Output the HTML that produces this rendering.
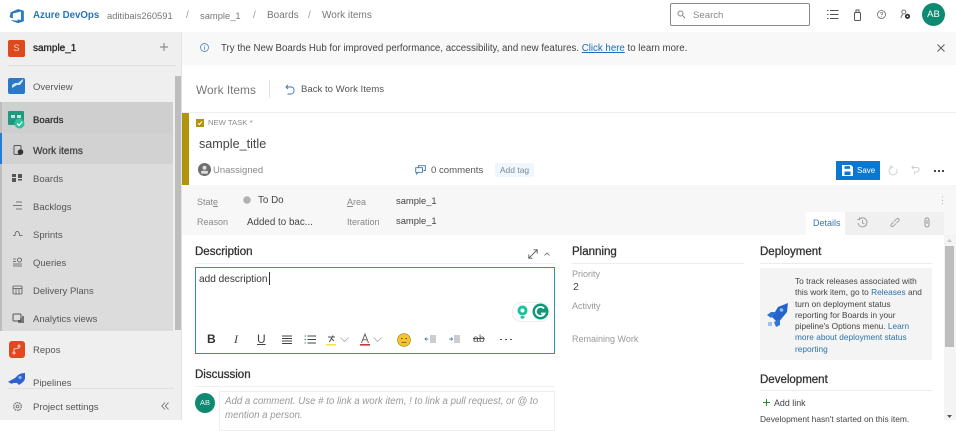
<!DOCTYPE html>
<html><head><meta charset="utf-8"><style>
html,body{margin:0;padding:0}
body{width:956px;height:420px;overflow:hidden;position:relative;background:#fff;font-family:"Liberation Sans",sans-serif;color:#333}
.t{position:absolute;white-space:nowrap;font-size:10px;line-height:14px}
.b{position:absolute}
.s{-webkit-text-stroke:.3px currentColor}
.h{font-size:11.5px;color:#333;-webkit-text-stroke:.3px #333}
.n{font-size:9.5px;color:#555}
svg{position:absolute;overflow:visible}
</style></head><body>
<!-- top bar -->
<svg style="left:9px;top:8px" width="16" height="16" viewBox="0 0 16 16"><path d="M2 4.5 L9 1.5 L14.5 3 V13 L9 14.8 L2.5 12.5 L9 13 V4 L3.5 5.5 V10 L1 9 Z" fill="#2b7cc4" stroke="#1d6fb8" stroke-width=".6"/><path d="M4 5.5 L12 3.5 V12 L4 10.5Z" fill="#fff"/></svg>
<span class="t" style="left:33px;top:9px;font-weight:bold;color:#2a74b8;font-size:9.7px">Azure DevOps</span>
<span class="t" style="left:107px;top:9px;color:#777;font-size:9.4px">aditibais260591</span>
<span class="t" style="left:186px;top:9px;color:#999">/</span>
<span class="t" style="left:200px;top:9px;color:#777;font-size:9.4px">sample_1</span>
<span class="t" style="left:253px;top:9px;color:#999">/</span>
<span class="t" style="left:267px;top:9px;color:#777">Boards</span>
<span class="t" style="left:308px;top:9px;color:#999">/</span>
<span class="t" style="left:322px;top:9px;color:#777">Work items</span>
<div class="b" style="left:670px;top:3px;width:140px;height:23px;border:1px solid #8a8a8a;border-radius:2px;box-sizing:border-box"></div>
<svg style="left:677px;top:10px" width="9" height="9" viewBox="0 0 9 9"><circle cx="3.5" cy="3.5" r="2.5" fill="none" stroke="#888"/><path d="M5.5 5.5L8 8" stroke="#888"/></svg>
<span class="t" style="left:693px;top:9px;color:#888;font-size:9.6px">Search</span>
<svg style="left:826px;top:9px" width="13" height="11" viewBox="0 0 13 11" stroke="#555" fill="none"><path d="M4 1.5H12.5M4 5.5H12.5M4 9.5H12.5M1 1.5h1.5M1 5.5h1.5M1 9.5h1.5"/></svg>
<svg style="left:853px;top:9px" width="9" height="12" viewBox="0 0 9 12" stroke="#555" fill="none"><rect x="1.5" y="3.5" width="6" height="8" rx="1"/><path d="M3 3.5V1h3v2.5"/></svg>
<svg style="left:877px;top:10px" width="9" height="9" viewBox="0 0 9 9"><circle cx="4.5" cy="4.5" r="4" fill="none" stroke="#666" stroke-width=".8"/><path d="M3.3 3.5c.2-1.4 2.4-1.2 2.4 0 0 .9-1.2.8-1.2 1.8M4.5 6.3v.8" fill="none" stroke="#666" stroke-width=".7"/></svg>
<svg style="left:900px;top:9px" width="11" height="11" viewBox="0 0 11 11"><circle cx="3.8" cy="3" r="2" fill="none" stroke="#555" stroke-width=".8"/><path d="M1 9c0-2 1-3 2-3.4" fill="none" stroke="#555" stroke-width=".8"/><circle cx="7.5" cy="7.3" r="2.6" fill="#333"/><circle cx="7.5" cy="7.3" r=".8" fill="#fff"/></svg>
<div class="b" style="left:922px;top:3px;width:23px;height:23px;border-radius:50%;background:#0f8a72;color:#fff;font-size:9.5px;line-height:23px;text-align:center">AB</div>
<!-- sidebar -->
<div class="b" style="left:0;top:32px;width:182px;height:388px;background:#efefef"></div>
<div class="b" style="left:181px;top:32px;width:1px;height:388px;background:#e2e2e2"></div>
<div class="b" style="left:8px;top:65px;width:168px;height:1px;background:#e0e0e0"></div>
<div class="b" style="left:8px;top:40px;width:17px;height:17px;border-radius:2px;background:#df4a1c;color:#f5d5c8;font-size:9px;line-height:17px;text-align:center">S</div>
<span class="t s" style="left:33px;top:42px;color:#222;font-size:10px">sample_1</span>
<svg style="left:160px;top:43px" width="8" height="8" stroke="#777" stroke-width=".9"><path d="M4 0V8M0 4H8"/></svg>
<div class="b" style="left:8px;top:78px;width:17px;height:16px;background:#2a78c6;border-radius:2px"></div>
<svg style="left:10px;top:78px" width="15" height="14" viewBox="0 0 15 14"><path d="M2 10 L7 7 H10 L13 3 V1 L8 5 H5 L2 7Z" fill="#cfe6fb"/></svg>
<span class="t n" style="left:33px;top:81px">Overview</span>
<div class="b" style="left:0;top:102px;width:173px;height:229px;background:#dcdcdc"></div>
<div class="b" style="left:0;top:102px;width:2px;height:229px;background:#bdbdbd"></div>
<div class="b" style="left:2px;top:102px;width:171px;height:62px;background:#cfcfcf"></div>
<div class="b" style="left:0;top:133px;width:173px;height:31px;background:#d2d2d2"></div>
<div class="b" style="left:0;top:133px;width:2px;height:31px;background:#1f7fd6"></div>
<div class="b" style="left:8px;top:111px;width:16px;height:14px;background:#1f9a80;border-radius:1px"></div>
<div class="b" style="left:11px;top:115px;width:4px;height:3px;background:#bfe8dd"></div><div class="b" style="left:17px;top:115px;width:4px;height:3px;background:#bfe8dd"></div>
<svg style="left:14px;top:118px" width="11" height="11" viewBox="0 0 11 11"><circle cx="5.5" cy="5.5" r="5" fill="#2fc09c"/><path d="M3 5.5L5 7.5L8.2 3.8" fill="none" stroke="#fff" stroke-width="1.2"/></svg>
<span class="t s" style="left:33px;top:114px;color:#333;font-size:9.6px">Boards</span>
<svg style="left:13px;top:144px" width="11" height="12" viewBox="0 0 11 12"><rect x="1" y="1.5" width="7" height="9" rx="1" fill="none" stroke="#555"/><circle cx="7.5" cy="8" r="2.8" fill="#333"/></svg>
<span class="t s" style="left:33px;top:145px;color:#444;font-size:10px">Work items</span>
<svg style="left:12px;top:174px" width="11" height="9" viewBox="0 0 11 9" fill="#555"><rect width="4" height="3"/><rect y="4" width="4" height="4"/><rect x="6" width="4" height="4"/><rect x="6" y="5" width="4" height="1.5"/></svg>
<span class="t n" style="left:33px;top:173px">Boards</span>
<svg style="left:12px;top:201px" width="11" height="9" viewBox="0 0 11 9" stroke="#555" fill="none"><path d="M4 1H10M1 4.5H10M4 8H10" stroke-width=".8"/></svg>
<span class="t n" style="left:33px;top:201px">Backlogs</span>
<svg style="left:12px;top:229px" width="11" height="9" viewBox="0 0 11 9" stroke="#555" fill="none"><path d="M1 6.5H3C3 1 7.5 1 7.5 6.5H10.5" stroke-width=".8"/></svg>
<span class="t n" style="left:33px;top:229px">Sprints</span>
<svg style="left:12px;top:257px" width="11" height="10" viewBox="0 0 11 10" stroke="#555" fill="none"><path d="M1 2H4M1 4.5H4M1 7H10M1 9H10" stroke-width=".8"/><circle cx="7.5" cy="3" r="2" stroke-width=".8"/></svg>
<span class="t n" style="left:33px;top:257px">Queries</span>
<svg style="left:12px;top:285px" width="11" height="10" viewBox="0 0 11 10" stroke="#555" fill="none"><rect x="1" y="1" width="9" height="8" rx="1" stroke-width=".8"/><path d="M1 3.5H10M4 3.5V9M7 3.5V9" stroke-width=".7"/></svg>
<span class="t n" style="left:33px;top:285px">Delivery Plans</span>
<svg style="left:12px;top:313px" width="12" height="11" viewBox="0 0 12 11"><rect x="1" y="1" width="8" height="7" rx="1" fill="none" stroke="#555"/><path d="M7 10V7M9 10V5M11 10V3" stroke="#333" stroke-width="1.2"/></svg>
<span class="t n" style="left:33px;top:313px">Analytics views</span>
<div class="b" style="left:9px;top:341px;width:16px;height:17px;background:#e0491f;border-radius:3px"></div>
<svg style="left:12px;top:344px" width="10" height="11" viewBox="0 0 10 11" stroke="#f7c6b5" fill="none"><path d="M2 9V5L7 4V2" stroke-width="1"/><circle cx="2" cy="9" r="1"/><circle cx="7" cy="2" r="1"/></svg>
<span class="t n" style="left:33px;top:344px">Repos</span>
<svg style="left:8px;top:373px" width="18" height="13" viewBox="0 0 18 13"><path d="M0 9 C4 6 7 6 9 3 C11 1 14 0 17 0 V5 C17 8 14 10 11 12 L9 10 L5 10 L4 11 Z" fill="#2f62cf"/><circle cx="12" cy="4.5" r="1.6" fill="#86b3f0"/></svg>
<span class="t n" style="left:33px;top:377px">Pipelines</span>
<div class="b" style="left:0;top:387px;width:181px;height:33px;background:#efefef"></div>
<div class="b" style="left:8px;top:388px;width:166px;height:1px;background:#e0e0e0"></div>
<svg style="left:12px;top:401px" width="11" height="11" viewBox="0 0 11 11"><circle cx="5.5" cy="5.5" r="3.8" fill="none" stroke="#666" stroke-width="1.2" stroke-dasharray="1.6 .8"/><circle cx="5.5" cy="5.5" r="1.4" fill="none" stroke="#666" stroke-width=".8"/></svg>
<span class="t n" style="left:33px;top:401px;font-size:9.6px">Project settings</span>
<svg style="left:161px;top:402px" width="8" height="8" viewBox="0 0 8 8" fill="none" stroke="#666" stroke-width=".8"><path d="M4 0.5L.8 4L4 7.5M7.5 .5L4.3 4L7.5 7.5"/></svg>
<div class="b" style="left:175px;top:76px;width:6px;height:254px;background:#bdbdbd"></div>
<!-- banner -->
<div class="b" style="left:182px;top:32px;width:774px;height:33px;background:#f8f8f8"></div>
<svg style="left:200px;top:43px" width="9" height="9" viewBox="0 0 9 9"><circle cx="4.5" cy="4.5" r="4" fill="none" stroke="#5a8fc9" stroke-width=".9"/><path d="M4.5 4V6.8M4.5 2.2v1" stroke="#5a8fc9" stroke-width=".9"/></svg>
<span class="t" style="left:221px;top:42px;font-size:9.7px;color:#444">Try the New Boards Hub for improved performance, accessibility, and new features. <span style="color:#1f6cb5;text-decoration:underline">Click here</span> to learn more.</span>
<svg style="left:937px;top:44px" width="8" height="8" viewBox="0 0 8 8" stroke="#555" stroke-width=".9"><path d="M.5.5L7.5 7.5M7.5.5L.5 7.5"/></svg>
<!-- header -->
<span class="t" style="left:196px;top:82px;font-size:11.9px;color:#777;line-height:16px">Work Items</span>
<div class="b" style="left:269px;top:80px;width:1px;height:18px;background:#e2e2e2"></div>
<svg style="left:285px;top:84px" width="10" height="11" viewBox="0 0 10 11" fill="none" stroke="#3b76b2" stroke-width=".9"><path d="M1 3H6.5C10 3 10 10 6 10H2.5M3 .8L1 3L3 5"/></svg>
<span class="t" style="left:301px;top:83px;color:#555;font-size:9.6px">Back to Work Items</span>
<div class="b" style="left:182px;top:112px;width:774px;height:1px;background:#efefef"></div>
<!-- work item header -->
<div class="b" style="left:182px;top:113px;width:7px;height:72px;background:#b2930e"></div>
<div class="b" style="left:196px;top:119px;width:8px;height:8px;background:#b2930e"></div>
<svg style="left:197px;top:120px" width="6" height="6" viewBox="0 0 6 6"><path d="M1 3.2L2.4 4.6L5 1.4" fill="none" stroke="#fff"/></svg>
<span class="t" style="left:208px;top:116px;font-size:7.7px;color:#8a8a8a">NEW TASK *</span>
<span class="t" style="left:199px;top:136px;font-size:12.6px;color:#444;line-height:16px">sample_title</span>
<svg style="left:198px;top:163px" width="13" height="13" viewBox="0 0 13 13"><circle cx="6.5" cy="6.5" r="6.5" fill="#6d6d6d"/><circle cx="6.5" cy="4.8" r="2" fill="#ddd"/><rect x="3" y="7.8" width="7" height="3" rx="1.4" fill="#ddd"/></svg>
<span class="t" style="left:213px;top:164px;color:#8a8a8a;font-size:9.5px">Unassigned</span>
<svg style="left:415px;top:165px" width="11" height="10" viewBox="0 0 11 10" fill="none" stroke="#3b76b2" stroke-width=".9"><path d="M3.5 2.5V.7H10.3V5.5H8.5M.7 2.7H7.5V7.3H3.2L1.7 9V7.3H.7Z"/></svg>
<span class="t" style="left:431px;top:164px;color:#555;font-size:9.6px">0 comments</span>
<div class="b" style="left:495px;top:163px;width:39px;height:14px;background:#eff6fc;color:#7d8b99;font-size:8.5px;line-height:14px;text-align:center">Add tag</div>
<div class="b" style="left:836px;top:161px;width:44px;height:19px;background:#0a78d0"></div>
<svg style="left:842px;top:165px" width="11" height="11" viewBox="0 0 11 11"><path d="M0 0H9L11 2V11H0Z" fill="#fff"/><rect x="2.5" y="1.2" width="5.5" height="2.6" fill="#0a78d0"/><rect x="2.5" y="6.5" width="6" height="3.5" fill="#0a78d0"/></svg>
<span class="t" style="left:857px;top:164px;color:#fff;font-size:8px">Save</span>
<svg style="left:888px;top:165px" width="10" height="11" viewBox="0 0 10 11" fill="none" stroke="#d4d4d4"><path d="M8.5 4A4 4 0 1 1 5.5 2H3M3.5 .4L2 2L3.5 3.6"/></svg>
<svg style="left:911px;top:165px" width="9" height="10" viewBox="0 0 9 10" fill="none" stroke="#cfcfcf"><path d="M1 2.5H6C9 2.5 9 7 5 7H3.5V9.5M2.5 .8L1 2.5L2.5 4"/></svg>
<span class="b" style="left:934px;top:170px;width:2px;height:2px;background:#444;box-shadow:4px 0 #444,8px 0 #444"></span>
<!-- fields band -->
<div class="b" style="left:182px;top:185px;width:774px;height:50px;background:#f7f7f7"></div>
<span class="t" style="left:197px;top:195px;color:#888;font-size:9px"><span>Stat</span><span style="text-decoration:underline">e</span></span>
<svg style="left:243px;top:196px" width="8" height="8"><circle cx="4" cy="4" r="3.8" fill="#b2b2b2"/></svg>
<span class="t" style="left:258px;top:194px;color:#444;font-size:9.8px">To Do</span>
<span class="t" style="left:347px;top:195px;color:#888;font-size:9px"><span style="text-decoration:underline">A</span>rea</span>
<span class="t" style="left:396px;top:194px;color:#444;font-size:9.4px">sample_1</span>
<span class="t" style="left:197px;top:215px;color:#888;font-size:9px">Reason</span>
<span class="t" style="left:247px;top:216px;color:#444;font-size:9.8px">Added to bac...</span>
<span class="t" style="left:347px;top:215px;color:#888;font-size:9px">Iteration</span>
<span class="t" style="left:396px;top:214px;color:#444;font-size:9.4px">sample_1</span>
<span class="t" style="left:938px;top:193px;color:#aaa;font-size:9px">⋮</span>
<div class="b" style="left:845px;top:212px;width:99px;height:23px;background:#f0f0f0"></div>
<div class="b" style="left:806px;top:212px;width:39px;height:23px;background:#fff"></div>
<span class="t" style="left:813px;top:216px;color:#3b76b2;font-size:9px">Details</span>
<svg style="left:857px;top:217px" width="11" height="11" viewBox="0 0 11 11" fill="none" stroke="#999" stroke-width=".9"><path d="M2 2.5A4.5 4.5 0 1 1 1 6M.5 2.5H2.5V.5M5.5 3V6L7.5 7"/></svg>
<svg style="left:890px;top:217px" width="10" height="11" viewBox="0 0 10 11" fill="none" stroke="#aaa" stroke-width="1.1"><path d="M4 4.5L6.5 2C8.5.5 10 2.5 8.5 4L6.5 6M6 6.5L3.5 9C1.5 10.5 0 8.5 1.5 7L3.5 5"/></svg>
<svg style="left:924px;top:217px" width="6" height="11" viewBox="0 0 6 11" fill="none" stroke="#999"><rect x="1" y="1" width="4" height="9" rx="2"/><path d="M3 3V7"/></svg>
<!-- Description -->
<span class="t h" style="left:195px;top:245px">Description</span>
<div class="b" style="left:195px;top:263px;width:360px;height:1px;background:#ecf2f5"></div>
<svg style="left:528px;top:249px" width="10" height="10" viewBox="0 0 10 10" fill="none" stroke="#555" stroke-width=".9"><path d="M.8 9.2L9.2.8M5.5.8H9.2V4.5M.8 5.5V9.2H4.5"/></svg>
<svg style="left:544px;top:252px" width="6" height="4" viewBox="0 0 6 4" fill="none" stroke="#666" stroke-width=".8"><path d="M.5 3.5L3 1L5.5 3.5"/></svg>
<div class="b" style="left:195px;top:267px;width:360px;height:87px;border:1px solid #2e8fb0;box-sizing:border-box"></div>
<span class="t" style="left:199px;top:273px;font-size:10.1px;color:#333">add description</span>
<div class="b" style="left:269px;top:272px;width:1px;height:13px;background:#333"></div>
<div class="b" style="left:512px;top:302px;width:38px;height:20px;background:#fff;border-radius:9px 10px 10px 9px;border:1px solid #eee;box-sizing:border-box"></div>
<svg style="left:516px;top:304px" width="13" height="16" viewBox="0 0 13 16"><circle cx="6.5" cy="6.5" r="5" fill="#15c39a"/><circle cx="6.5" cy="6.5" r="2" fill="#fff"/><rect x="4.5" y="12" width="4" height="2.5" rx="1" fill="#15c39a"/></svg>
<svg style="left:532px;top:303px" width="17" height="17" viewBox="0 0 17 17"><circle cx="8.5" cy="8.5" r="8" fill="#0d9a79"/><path d="M12 5.5A4.6 4.6 0 1 0 12.6 10.5H9" fill="none" stroke="#fff" stroke-width="1.8"/></svg>
<span class="t" style="left:207px;top:332px;font-size:12px;font-weight:bold;color:#333">B</span>
<span class="t" style="left:234px;top:332px;font-size:12px;font-style:italic;font-family:'Liberation Serif',serif;color:#444">I</span>
<span class="t" style="left:257px;top:332px;font-size:12px;color:#444;text-decoration:underline">U</span>
<svg style="left:281px;top:335px" width="12" height="9" stroke="#444" stroke-width=".9"><path d="M1 1H11M1 3.5H11M1 6H11M1 8.5H11"/></svg>
<svg style="left:304px;top:335px" width="12" height="9"><path d="M3.5 1H12M3.5 4.5H12M3.5 8H12" stroke="#444" stroke-width=".9"/><path d="M.5 1H2M.5 4.5H2M.5 8H2" stroke="#2e8fb0" stroke-width=".9"/></svg>
<svg style="left:326px;top:334px" width="12" height="12" viewBox="0 0 12 12"><path d="M2 3H9M7 1.5L3.5 8M5 4L8 7" stroke="#555" stroke-width="1" fill="none"/><rect x="0" y="10" width="10" height="1.6" fill="#f4e542"/></svg>
<svg style="left:340px;top:337px" width="9" height="5" fill="none" stroke="#aaa" stroke-width=".8"><path d="M.5.5L4.5 4.5L8.5.5"/></svg>
<svg style="left:360px;top:333px" width="10" height="13" viewBox="0 0 10 13"><path d="M1.5 10L5 1L8.5 10M3 6.8H7" stroke="#555" fill="none" stroke-width=".9"/><rect x="0" y="11" width="10" height="1.6" fill="#d13438"/></svg>
<svg style="left:373px;top:337px" width="9" height="5" fill="none" stroke="#aaa" stroke-width=".8"><path d="M.5.5L4.5 4.5L8.5.5"/></svg>
<svg style="left:397px;top:333px" width="14" height="14" viewBox="0 0 14 14"><circle cx="7" cy="7" r="6.4" fill="#f6c62f" stroke="#b98a14" stroke-width=".8"/><circle cx="4.8" cy="5.5" r=".8" fill="#6a4b08"/><circle cx="9.2" cy="5.5" r=".8" fill="#6a4b08"/><path d="M4.5 9.3H9.5" stroke="#6a4b08" stroke-width=".8"/></svg>
<svg style="left:424px;top:335px" width="12" height="9" stroke="#777" stroke-width=".8"><path d="M6 1H12M6 3H12M6 5H12M6 7H12"/><path d="M4.5 4H1M2.5 2.5L1 4L2.5 5.5" fill="none" stroke="#3b76b2"/></svg>
<svg style="left:448px;top:335px" width="12" height="9" stroke="#777" stroke-width=".8"><path d="M6 1H12M6 3H12M6 5H12M6 7H12"/><path d="M1 4H4.5M3 2.5L4.5 4L3 5.5" fill="none" stroke="#3b76b2"/></svg>
<span class="t" style="left:473px;top:332px;font-size:10.5px;color:#555;text-decoration:line-through">ab</span>
<span class="b" style="left:500px;top:339px;width:2px;height:1px;background:#555;box-shadow:5px 0 #555,10px 0 #555"></span>
<!-- Discussion -->
<span class="t h" style="left:195px;top:368px">Discussion</span>
<div class="b" style="left:195px;top:386px;width:360px;height:1px;background:#eeeeee"></div>
<div class="b" style="left:195px;top:393px;width:20px;height:20px;border-radius:50%;background:#0f8a72;color:#e8f5f2;font-size:7.5px;line-height:20px;text-align:center">AB</div>
<div class="b" style="left:219px;top:391px;width:336px;height:40px;border:1px solid #eee;box-sizing:border-box"></div>
<span class="t" style="left:225px;top:395px;font-size:9.7px;font-style:italic;color:#999;line-height:14px;white-space:normal;width:325px">Add a comment. Use # to link a work item, ! to link a pull request, or @ to mention a person.</span>
<!-- Planning -->
<span class="t h" style="left:572px;top:245px">Planning</span>
<div class="b" style="left:572px;top:263px;width:172px;height:1px;background:#ececec"></div>
<span class="t" style="left:572px;top:267px;color:#999;font-size:9px">Priority</span>
<span class="t" style="left:573px;top:281px;color:#444;font-size:10.4px">2</span>
<span class="t" style="left:572px;top:299px;color:#999;font-size:9px">Activity</span>
<span class="t" style="left:572px;top:332px;color:#999;font-size:9px">Remaining Work</span>
<!-- Deployment -->
<span class="t h" style="left:760px;top:245px">Deployment</span>
<div class="b" style="left:760px;top:263px;width:172px;height:1px;background:#ececec"></div>
<div class="b" style="left:760px;top:268px;width:172px;height:92px;background:#f4f4f4"></div>
<svg style="left:766px;top:303px" width="23" height="25" viewBox="0 0 23 25"><path d="M22 0 L21 9 L12 20 L6 14 L12 4 Z" fill="#2463c9"/><path d="M5 9 H11 L5 15 L1 12 Z" fill="#2f75d6"/><path d="M14 16 V22 L10 24 L8 19Z" fill="#2f75d6"/><circle cx="15.5" cy="7" r="1.8" fill="#8fbcf2"/><path d="M2 19H6V23H2Z" fill="#9cc3ee"/></svg>
<span class="t" style="left:795px;top:276px;font-size:8.3px;line-height:11.3px;color:#444">To track releases associated with<br>this work item, go to <span style="color:#2b74ad">Releases</span> and<br>turn on deployment status<br>reporting for Boards in your<br>pipeline's Options menu. <span style="color:#2b74ad">Learn<br>more about deployment status<br>reporting</span></span>
<span class="t h" style="left:760px;top:373px">Development</span>
<div class="b" style="left:760px;top:390px;width:172px;height:1px;background:#ececec"></div>
<svg style="left:763px;top:399px" width="7" height="7" stroke="#2e8b2e"><path d="M3.5 0V7M0 3.5H7"/></svg>
<span class="t" style="left:774px;top:396px;color:#444;font-size:8.9px">Add link</span>
<span class="t" style="left:760px;top:412px;color:#444;font-size:8.4px">Development hasn't started on this item.</span>
<!-- right scrollbar -->
<div class="b" style="left:944px;top:235px;width:12px;height:185px;background:#f4f4f4"></div>
<div class="b" style="left:945px;top:246px;width:9px;height:101px;background:#bdbdbd"></div>
<svg style="left:947px;top:239px" width="5" height="3"><path d="M0 3L2.5 0L5 3Z" fill="#c5c5c5"/></svg>
<svg style="left:947px;top:415px" width="5" height="3"><path d="M0 0L2.5 3L5 0Z" fill="#555"/></svg>
</body></html>
